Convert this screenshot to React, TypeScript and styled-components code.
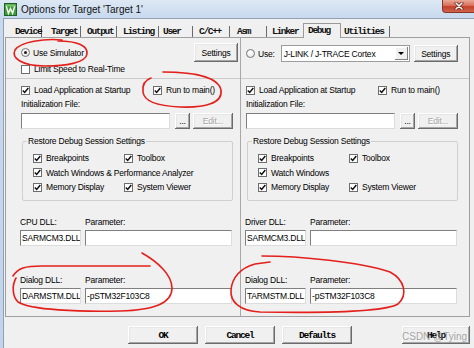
import styled, { createGlobalStyle } from "styled-components";

const GlobalStyle = createGlobalStyle`
  html, body {
    margin: 0;
    padding: 0;
  }
  body {
    background: #c4d6ec;
    font-family: "Liberation Sans", Arial, sans-serif;
  }
`;

const Window = styled.div`
  position: relative;
  width: 474px;
  height: 348px;
  overflow: hidden;
  display: flex;
  flex-direction: column;
  background: linear-gradient(180deg, #dde8f4 0px, #c8d9ee 18px, #c2d4ea 100%);
`;

const TitleBar = styled.div`
  height: 18px;
  flex-shrink: 0;
  display: flex;
  align-items: center;
  padding-left: 4px;
`;

const TitleText = styled.span`
  margin-left: 4px;
  font-size: 10px;
  color: #111;
  white-space: nowrap;
`;

const CloseButton = styled.div`
  margin-left: auto;
  align-self: flex-start;
  width: 32px;
  height: 13px;
  box-sizing: border-box;
  border: 1px solid #8b3428;
  border-top: none;
  border-right: none;
  border-radius: 0 0 0 4px;
  background: linear-gradient(180deg, #e9a996 0%, #d8725e 45%, #c4402b 55%, #d0644c 100%);
  display: flex;
  align-items: center;
  justify-content: center;
`;

const Client = styled.div`
  flex: 1;
  margin-left: 3px;
  background: #f0f0f0;
  border-left: 1px solid #8fa1b8;
  border-top: 1px solid #8fa1b8;
  display: flex;
  flex-direction: column;
`;

const TabStrip = styled.div`
  height: 18px;
  flex-shrink: 0;
  display: flex;
  align-items: flex-end;
  padding-left: 1px;
  position: relative;
  z-index: 1;
`;

const monoFont = `"Liberation Mono", "Courier New", monospace`;

const Tab = styled.div<{ $w: number; $pad: number; $active?: boolean }>`
  box-sizing: border-box;
  width: ${(p) => p.$w}px;
  padding-left: ${(p) => p.$pad}px;
  height: ${(p) => (p.$active ? 15 : 11)}px;
  font-family: ${monoFont};
  font-weight: bold;
  font-size: 9.5px;
  letter-spacing: -1.3px;
  line-height: ${(p) => (p.$active ? 13 : 11)}px;
  color: #111;
  white-space: nowrap;
  border-right: 1px solid #6a6a6a;
  ${(p) =>
    p.$active &&
    `
    margin-left: -1px;
    margin-bottom: -1px;
    background: #f0f0f0;
    border: 1px solid #9a9a9a;
    border-bottom: none;
  `}
`;

const Panel = styled.div`
  margin-left: 1px;
  width: 465px;
  height: 280px;
  box-sizing: border-box;
  border: 1px solid #a0a0a0;
  display: grid;
  grid-template-columns: 235px 1fr;
`;

const Column = styled.div<{ $pl: number; $pr: number; $divider?: boolean }>`
  --pl: ${(p) => p.$pl}px;
  --pr: ${(p) => p.$pr}px;
  box-sizing: border-box;
  border-right: ${(p) => (p.$divider ? "1px solid #a8a8a8" : "none")};
  display: flex;
  flex-direction: column;
`;

const TopSection = styled.div<{ $top: number }>`
  height: 40px;
  flex-shrink: 0;
  box-sizing: content-box;
  padding: ${(p) => p.$top}px var(--pr) 0 var(--pl);
  height: ${(p) => 40 - p.$top}px;
  border-bottom: 1px solid #cbcbcb;
`;

const BodySection = styled.div`
  padding: 5px var(--pr) 0 var(--pl);
  display: flex;
  flex-direction: column;
`;

const Row = styled.div<{ $h: number; $mt?: number }>`
  display: flex;
  align-items: center;
  height: ${(p) => p.$h}px;
  margin-top: ${(p) => p.$mt ?? 0}px;
`;

const Text = styled.span<{ $muted?: boolean }>`
  font-size: 8.5px;
  letter-spacing: -0.2px;
  line-height: 12px;
  color: ${(p) => (p.$muted ? "#a2a2a2" : "#000")};
  white-space: nowrap;
`;

const Label = styled(Text)<{ $mt?: number }>`
  display: block;
  margin-top: ${(p) => p.$mt ?? 0}px;
  height: 12px;
`;

const Check = styled.label`
  display: flex;
  align-items: center;
  gap: 4px;
  height: 12px;
`;

const Box = styled.span`
  width: 9px;
  height: 9px;
  box-sizing: border-box;
  border: 1px solid #6e6e6e;
  background: #fff;
  display: inline-flex;
  align-items: center;
  justify-content: center;
  flex-shrink: 0;
`;

const RadioDot = styled.span<{ $on?: boolean }>`
  width: 9px;
  height: 9px;
  box-sizing: border-box;
  border-radius: 50%;
  border: 1px solid #767676;
  background: radial-gradient(circle at 40% 35%, #ffffff, #e2e2e2);
  display: inline-flex;
  align-items: center;
  justify-content: center;
  flex-shrink: 0;
  &::after {
    content: "";
    display: ${(p) => (p.$on ? "block" : "none")};
    width: 3px;
    height: 3px;
    border-radius: 50%;
    background: #1e1e1e;
  }
`;

const Radio = styled.label`
  display: flex;
  align-items: center;
  gap: 3px;
`;

const Button = styled.div<{ $w: number; $h: number; $mono?: boolean; $disabled?: boolean; $ml?: number }>`
  box-sizing: border-box;
  width: ${(p) => p.$w}px;
  height: ${(p) => p.$h}px;
  margin-left: ${(p) => (p.$ml === undefined ? 0 : p.$ml)}px;
  flex-shrink: 0;
  display: flex;
  align-items: center;
  justify-content: center;
  background: #f0f0f0;
  box-shadow: inset -1px -1px #6b6b6b, inset 1px 1px #ffffff, inset -2px -2px #a6a6a6,
    inset 2px 2px #e6e6e6;
  white-space: nowrap;
  color: ${(p) => (p.$disabled ? "#a6a6a6" : "#000")};
  text-shadow: ${(p) => (p.$disabled ? "1px 1px #ffffff" : "none")};
  font-family: ${(p) => (p.$mono ? monoFont : `"Liberation Sans", Arial, sans-serif`)};
  font-weight: ${(p) => (p.$mono ? "bold" : "normal")};
  font-size: ${(p) => (p.$mono ? "9.5px" : "8.5px")};
  letter-spacing: ${(p) => (p.$mono ? "-1.2px" : "-0.2px")};
`;

const PushRight = styled.div`
  margin-left: auto;
  display: flex;
`;

const Combo = styled.div`
  box-sizing: border-box;
  width: 129px;
  height: 17px;
  margin-left: 6px;
  border: 1px solid #9c9c9c;
  background: #fff;
  display: flex;
  align-items: center;
  padding-left: 2px;
`;

const ComboArrow = styled.span`
  margin-left: auto;
  margin-right: 1px;
  width: 13px;
  height: 13px;
  box-sizing: border-box;
  background: #f0f0f0;
  box-shadow: inset -1px -1px #808080, inset 1px 1px #ffffff;
  display: flex;
  align-items: center;
  justify-content: center;
  &::after {
    content: "";
    border-left: 3px solid transparent;
    border-right: 3px solid transparent;
    border-top: 3px solid #000;
  }
`;

const Field = styled.div<{ $w: number }>`
  box-sizing: border-box;
  width: ${(p) => p.$w}px;
  height: 16px;
  flex-shrink: 0;
  background: #fff;
  border: 1px solid;
  border-color: #7f7f7f #dcdcdc #dcdcdc #7f7f7f;
  padding-left: 1px;
  font-size: 8.5px;
  letter-spacing: -0.2px;
  line-height: 14px;
  white-space: nowrap;
  overflow: hidden;
  color: #000;
`;

const FileRow = styled.div`
  display: flex;
  align-items: center;
  height: 16px;
  margin-top: 3px;
`;

const TwoCol = styled.div<{ $first: number; $h: number; $gap?: number }>`
  display: grid;
  grid-template-columns: ${(p) => p.$first}px auto;
  grid-auto-rows: ${(p) => p.$h}px;
  row-gap: ${(p) => p.$gap ?? 0}px;
  align-items: center;
`;

const Wide = styled.div`
  grid-column: 1 / span 2;
`;

const GroupBox = styled.div`
  position: relative;
  margin-top: 12px;
  margin-left: 1px;
  width: 211px;
  box-sizing: border-box;
  border: 1px solid #cfcfcf;
  border-radius: 2px;
  padding: 10px 0 7px 10px;
`;

const Legend = styled.span`
  position: absolute;
  top: -7px;
  left: 4px;
  padding: 0 1px;
  background: #f0f0f0;
  font-size: 8.5px;
  letter-spacing: -0.2px;
  line-height: 12px;
  white-space: nowrap;
`;

const DllGrid = styled.div<{ $mt: number; $h: number }>`
  display: grid;
  grid-template-columns: 61px 147px;
  column-gap: 4px;
  height: ${(p) => p.$h}px;
  margin-top: ${(p) => p.$mt}px;
  margin-left: -1px;
  align-items: center;
`;

const ButtonRow = styled.div`
  display: flex;
  align-items: center;
  margin-top: 9px;
  padding-left: 124px;
  gap: 7px;
  height: 18px;
`;

const Annotations = styled.svg`
  position: absolute;
  left: 0;
  top: 0;
  pointer-events: none;
`;

const Watermark = styled.span`
  position: absolute;
  left: 402px;
  top: 331px;
  font-size: 10px;
  color: rgba(150, 150, 150, 0.85);
  white-space: nowrap;
  pointer-events: none;
`;

const CheckMark = () => (
  <svg width="7" height="7" viewBox="0 0 7 7">
    <path d="M0.8 3.4 L2.7 5.4 L6.3 1" stroke="#111" strokeWidth="1.5" fill="none" />
  </svg>
);

const CheckItem = ({ label }: { label: string }) => (
  <Check>
    <Box>
      <CheckMark />
    </Box>
    <Text>{label}</Text>
  </Check>
);

const EmptyCheck = ({ label }: { label: string }) => (
  <Check>
    <Box />
    <Text>{label}</Text>
  </Check>
);

const AppIcon = () => (
  <svg width="13" height="13" viewBox="0 0 13 13">
    <rect x="0.5" y="0.5" width="12" height="12" fill="#3b9b3f" stroke="#1f5f26" />
    <rect x="1.5" y="1.5" width="10" height="2" fill="#7cc36e" />
    <path d="M2.3 3.2 L4.4 10.3 L6.5 5.6 L8.6 10.3 L10.7 3.2" stroke="#f6f6e4" strokeWidth="1.5" fill="none" />
  </svg>
);

const CloseGlyph = () => (
  <svg width="10" height="8" viewBox="0 0 10 8">
    <path d="M2 1 L8 7 M8 1 L2 7" stroke="#5a1a10" strokeWidth="3" strokeLinecap="round" />
    <path d="M2 1 L8 7 M8 1 L2 7" stroke="#ffffff" strokeWidth="1.6" strokeLinecap="round" />
  </svg>
);

const tabs = [
  { label: "Device", w: 37, pad: 10 },
  { label: "Target", w: 39, pad: 9 },
  { label: "Output", w: 36, pad: 6 },
  { label: "Listing", w: 42, pad: 6 },
  { label: "User", w: 34, pad: 4 },
  { label: "C/C++", w: 37, pad: 6 },
  { label: "Asm", w: 37, pad: 7 },
  { label: "Linker", w: 37, pad: 5 },
  { label: "Debug", w: 38, pad: 4, active: true },
  { label: "Utilities", w: 49, pad: 3 },
];

type SideProps = {
  dllLabel: string;
  dll: string;
  dialogDll: string;
  watchLabel: string;
};

const SideBody = ({ dllLabel, dll, dialogDll, watchLabel }: SideProps) => (
  <BodySection>
    <TwoCol $first={132} $h={12}>
      <CheckItem label="Load Application at Startup" />
      <CheckItem label="Run to main()" />
    </TwoCol>
    <Label $mt={2}>Initialization File:</Label>
    <FileRow>
      <Field $w={149} />
      <Button $w={15} $h={16} $ml={5}>
        ...
      </Button>
      <Button $w={40} $h={16} $ml={3} $disabled>
        Edit...
      </Button>
    </FileRow>
    <GroupBox>
      <Legend>Restore Debug Session Settings</Legend>
      <TwoCol $first={91} $h={12} $gap={2.5}>
        <CheckItem label="Breakpoints" />
        <CheckItem label="Toolbox" />
        <Wide>
          <CheckItem label={watchLabel} />
        </Wide>
        <CheckItem label="Memory Display" />
        <CheckItem label="System Viewer" />
      </TwoCol>
    </GroupBox>
    <DllGrid $mt={15} $h={12}>
      <Text>{dllLabel}</Text>
      <Text>Parameter:</Text>
    </DllGrid>
    <DllGrid $mt={2} $h={16}>
      <Field $w={61}>{dll}</Field>
      <Field $w={147} />
    </DllGrid>
    <DllGrid $mt={28} $h={12}>
      <Text>Dialog DLL:</Text>
      <Text>Parameter:</Text>
    </DllGrid>
    <DllGrid $mt={2} $h={16}>
      <Field $w={61}>{dialogDll}</Field>
      <Field $w={147}>-pSTM32F103C8</Field>
    </DllGrid>
  </BodySection>
);

function App() {
  return (
    <Window>
      <GlobalStyle />
      <TitleBar>
        <AppIcon />
        <TitleText>Options for Target 'Target 1'</TitleText>
        <CloseButton>
          <CloseGlyph />
        </CloseButton>
      </TitleBar>
      <Client>
        <TabStrip>
          {tabs.map((t) => (
            <Tab key={t.label} $w={t.w} $pad={t.pad} $active={t.active}>
              {t.label}
            </Tab>
          ))}
        </TabStrip>
        <Panel>
          <Column $pl={15} $pr={2} $divider>
            <TopSection $top={5}>
              <Row $h={19}>
                <Radio>
                  <RadioDot $on />
                  <Text>Use Simulator</Text>
                </Radio>
                <PushRight>
                  <Button $w={44} $h={19}>
                    Settings
                  </Button>
                </PushRight>
              </Row>
              <Row $h={12} $mt={1}>
                <EmptyCheck label="Limit Speed to Real-Time" />
              </Row>
            </TopSection>
            <SideBody
              dllLabel="CPU DLL:"
              dll="SARMCM3.DLL"
              dialogDll="DARMSTM.DLL"
              watchLabel="Watch Windows & Performance Analyzer"
            />
          </Column>
          <Column $pl={5} $pr={10}>
            <TopSection $top={7}>
              <Row $h={17}>
                <Radio>
                  <RadioDot />
                  <Text>Use:</Text>
                </Radio>
                <Combo>
                  <Text>J-LINK / J-TRACE Cortex</Text>
                  <ComboArrow />
                </Combo>
                <Button $w={44} $h={17} $ml={4}>
                  Settings
                </Button>
              </Row>
            </TopSection>
            <SideBody
              dllLabel="Driver DLL:"
              dll="SARMCM3.DLL"
              dialogDll="TARMSTM.DLL"
              watchLabel="Watch Windows"
            />
          </Column>
        </Panel>
        <ButtonRow>
          <Button $w={70} $h={18} $mono>
            OK
          </Button>
          <Button $w={70} $h={18} $mono>
            Cancel
          </Button>
          <Button $w={70} $h={18} $mono>
            Defaults
          </Button>
          <Button $w={68} $h={18} $mono $ml={43}>
            Help
          </Button>
        </ButtonRow>
      </Client>
      <Annotations width="474" height="348" viewBox="0 0 474 348">
        <g stroke="#e3201b" strokeWidth="1.6" fill="none" strokeLinecap="round">
          <path d="M62 40 C45 38, 20 42, 15 50 C11 58, 22 66, 45 66 C65 66, 86 63, 87 54 C88 46, 78 41, 58 41" />
          <path d="M163 72 C190 72, 218 76, 221 90 C223 103, 205 108, 180 107 C158 106, 144 102, 143 92 C142 84, 145 80, 151 78" />
          <path d="M13 276 C18 268, 25 266, 42 266 L150 266" />
          <path d="M142 253 C158 262, 172 275, 172 288 C172 303, 155 310, 120 311 C80 312, 30 310, 18 302 C12 296, 12 285, 16 278" />
          <path d="M262 256 C300 256, 360 262, 390 272 C405 280, 408 295, 398 304 C385 312, 320 313, 260 312 C240 311, 230 302, 231 290 C232 278, 240 268, 255 264 L270 262" />
        </g>
      </Annotations>
      <Watermark>CSDN @Tying</Watermark>
    </Window>
  );
}

export default App;
